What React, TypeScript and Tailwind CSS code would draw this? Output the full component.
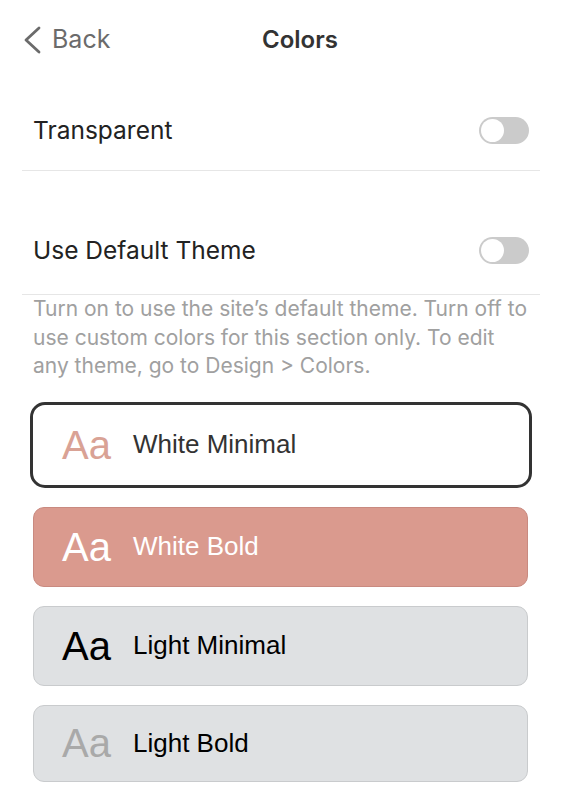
const ui = { fontFamily: "Inter, 'Noto Sans', sans-serif" };
const helv = { fontFamily: "'Liberation Sans', Arial, sans-serif" };

function Toggle() {
  return (
    <div className="flex h-[27px] w-[50px] items-center rounded-full bg-[#cbcbcb] px-[2px]">
      <div className="h-[23px] w-[23px] rounded-full bg-white" />
    </div>
  );
}

type Theme = {
  name: string;
  card: string;
  aa: string;
  label: string;
};

const THEMES: Theme[] = [
  {
    name: "White Minimal",
    card: "ml-[30px] mr-[34px] h-[86px] rounded-[15px] border-[3px] border-[#333333] bg-white pl-[29px]",
    aa: "text-[#d9a295]",
    label: "text-[#333333]",
  },
  {
    name: "White Bold",
    card: "ml-[33px] mr-[38px] h-[80px] rounded-[11px] border border-[#c98a80] bg-[#da9a8e] pl-[28px]",
    aa: "text-white",
    label: "text-white",
  },
  {
    name: "Light Minimal",
    card: "ml-[33px] mr-[38px] h-[80px] rounded-[11px] border border-[#c9cbcd] bg-[#dfe1e3] pl-[28px]",
    aa: "text-black",
    label: "text-black",
  },
  {
    name: "Light Bold",
    card: "ml-[33px] mr-[38px] h-[77px] rounded-[11px] border border-[#c9cbcd] bg-[#dfe1e3] pl-[28px]",
    aa: "text-[#a9a9a9]",
    label: "text-black",
  },
];

export default function App() {
  return (
    <div className="min-h-[802px] w-[566px] bg-white" style={ui}>
      {/* header */}
      <div className="flex h-[80px] items-center pl-[22px]">
        <div className="flex w-[240px] items-center text-[#6b6b6b]">
          <svg width="22" height="28" viewBox="0 0 22 28" fill="none">
            <polyline
              points="17,2 4,14 17,26"
              stroke="currentColor"
              strokeWidth="2.8"
              strokeLinecap="round"
              strokeLinejoin="round"
            />
          </svg>
          <span className="ml-[8px] text-[25px]">Back</span>
        </div>
        <div className="text-[24px] font-semibold text-[#333333]">Colors</div>
      </div>

      {/* transparent */}
      <div className="ml-[22px] mr-[26px] flex h-[91px] items-center justify-between border-b border-[#e6e6e6] pl-[11px] pr-[11px] pt-[10px]">
        <span className="text-[24.5px] text-[#222222]">Transparent</span>
        <Toggle />
      </div>

      {/* default theme */}
      <div className="ml-[22px] mr-[26px] mt-[40px] flex h-[84px] items-center justify-between border-b border-[#e6e6e6] pb-[4px] pl-[11px] pr-[11px]">
        <span className="text-[24.5px] text-[#222222]">Use Default Theme</span>
        <Toggle />
      </div>

      <p className="px-[33px] text-[21px] leading-[28.5px] text-[#a0a0a0]">
        Turn on to use the site’s default theme. Turn off to use custom colors for this section only. To edit any theme, go to Design &gt; Colors.
      </p>

      <div className="mt-[21px] flex flex-col gap-[19px]">
        {THEMES.map((t) => (
          <div key={t.name} className={`flex items-center ${t.card}`}>
            <span className={`w-[71px] text-[40px] leading-none ${t.aa}`} style={helv}>
              Aa
            </span>
            <span className={`text-[26px] ${t.label}`} style={helv}>
              {t.name}
            </span>
          </div>
        ))}
      </div>
    </div>
  );
}
